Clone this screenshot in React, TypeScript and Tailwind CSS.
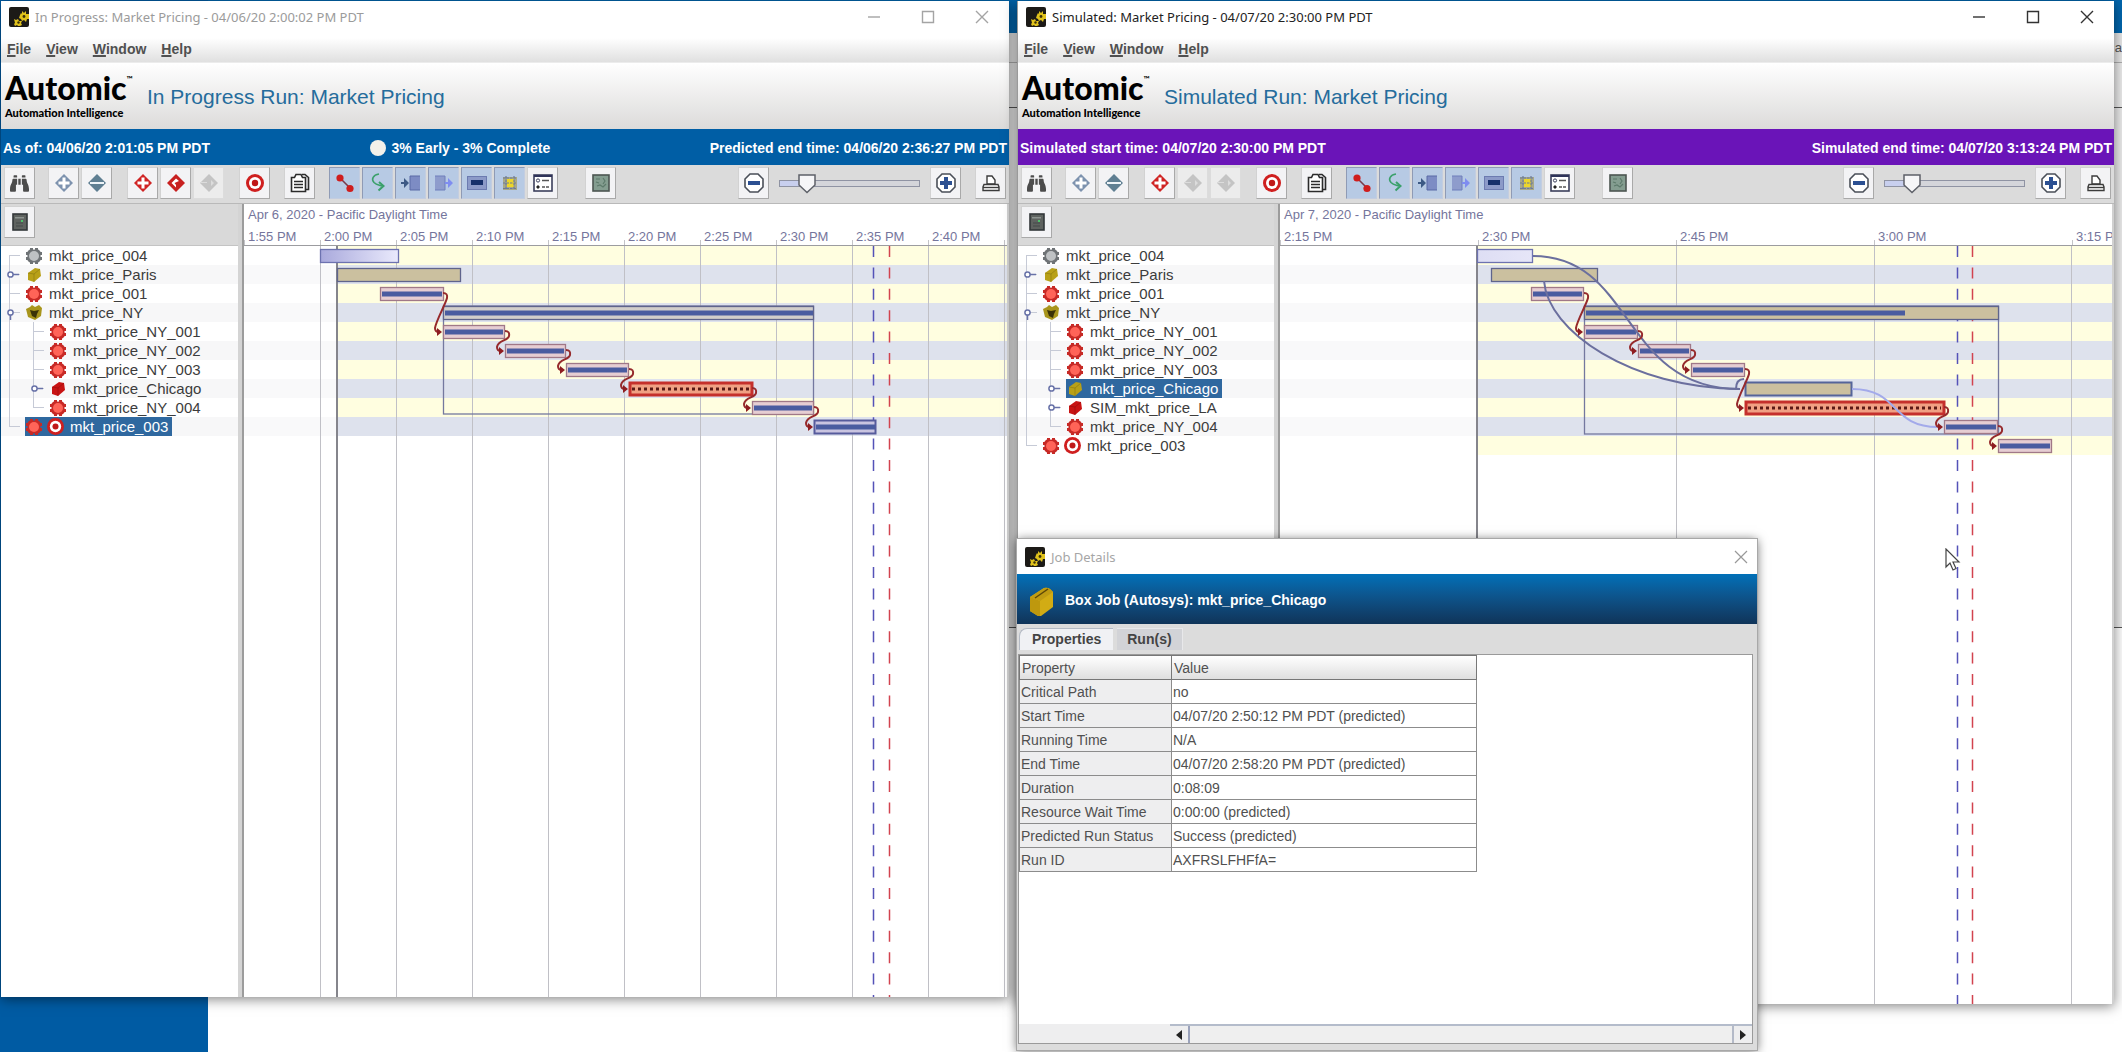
import { useState } from "react";
import type { ReactNode } from "react";
import { FaBinoculars } from "react-icons/fa";

/* ---------- icons ---------- */

function AppIcon() {
  return (
    <svg width="20" height="20" viewBox="0 0 20 20" aria-hidden="true">
      <rect width="20" height="20" rx="2" fill="#1c1a17" />
      <g fill="#e0c21c">
        <path d="M11 8l1-2 1 1V4l2 2 2-2v3l3 0v5l-2 0-1 3-2-2-2 1-1-2-2-1z" />
        <path d="M5 12l2 1 2-1 1 2h3l-1 2 1 2-2 1H9l-1-1-2 1-1-2 1-1z" />
      </g>
      <circle cx="15" cy="9.500" r="1.400" fill="#3c3208" />
      <circle cx="9.500" cy="15.500" r="1.200" fill="#3c3208" />
    </svg>
  );
}

function Diamond({ color, mark }: { color: string; mark: "plus" | "minus" | "left" | "right" }) {
  return (
    <svg width="20" height="20" viewBox="0 0 20 20" aria-hidden="true">
      <path d="M10 1l9 9-9 9-9-9z" fill={color} />
      {mark === "plus" && <path d="M8.500 4.500h3v4h4v3h-4v4h-3v-4h-4v-3h4z" fill="#fff" />}
      {mark === "minus" && <path d="M3 9h14v2H3z" fill="#eef4f8" />}
      {mark === "left" && <path d="M10 5.500L5.500 10l4.500 4.500v-2.500L8.500 10l4.500-2z" fill="#fff" />}
      {mark === "right" && <path d="M2 9h6v1H2zM12 7l3 3-3 3z" fill="#dcdcdc" />}
    </svg>
  );
}

function TargetIcon({ size }: { size: number }) {
  return (
    <svg width={size} height={size} viewBox="0 0 18 18" aria-hidden="true">
      <circle cx="9" cy="9" r="9" fill="#cf1f1f" />
      <circle cx="9" cy="9" r="6" fill="#fff" />
      <circle cx="9" cy="9" r="3.200" fill="#c01818" />
    </svg>
  );
}

function PagesIcon() {
  return (
    <svg width="20" height="20" viewBox="0 0 20 20" fill="none" stroke="#2b2b2b" strokeWidth="1.600" aria-hidden="true">
      <path d="M1.500 4.500h3l1.500-3h5l1.500 3h3v14h-14z" fill="#fff" />
      <path d="M12 1.500h3l3.500 3v12h-2.500" />
      <path d="M4 8.500h9M4 11.500h9M4 14.500h9" />
    </svg>
  );
}

function LinkIcon() {
  return (
    <svg width="20" height="20" viewBox="0 0 20 20" aria-hidden="true">
      <path d="M5 5l11 11" stroke="#7a3a4a" strokeWidth="1.600" />
      <circle cx="5" cy="5" r="3.600" fill="#cf1d1d" />
      <circle cx="15" cy="15.500" r="3.600" fill="#cf1d1d" />
    </svg>
  );
}

function CurveArrowIcon() {
  return (
    <svg width="20" height="20" viewBox="0 0 20 20" fill="none" stroke="#3aa06a" aria-hidden="true">
      <path d="M11 1C5 2 3 6 6 9.500c2 2 5 2.500 8 3.500" strokeWidth="1.600" />
      <path d="M11 9l4.500 4-5 4.500" strokeWidth="2" />
    </svg>
  );
}

function IntoBoxIcon() {
  return (
    <svg width="20" height="20" viewBox="0 0 20 20" aria-hidden="true">
      <rect x="9" y="3" width="10" height="14" fill="#7d8cc4" />
      <path d="M9 3v14M9 3h10M9 17h10" stroke="#5a6aa6" fill="none" />
      <path d="M0 9h3V5l5 5-5 5v-4H0z" fill="#3d5a85" />
    </svg>
  );
}

function OutOfBoxIcon() {
  return (
    <svg width="20" height="20" viewBox="0 0 20 20" aria-hidden="true">
      <rect x="1" y="3" width="10" height="14" fill="#8e9ccc" />
      <path d="M11 3v14M1 3h10M1 17h10" stroke="#6f7fbb" fill="none" />
      <path d="M11 9h3V5l5 5-5 5v-4h-3z" fill="#7f8df0" />
    </svg>
  );
}

function BarIcon() {
  return (
    <svg width="20" height="20" viewBox="0 0 20 20" aria-hidden="true">
      <rect x="0.500" y="3.500" width="19" height="13" fill="#8c9ac8" stroke="#6c7bb0" />
      <rect x="4" y="7" width="12" height="5" fill="#16306b" />
    </svg>
  );
}

function GridIcon() {
  return (
    <svg width="20" height="20" viewBox="0 0 20 20" aria-hidden="true">
      <rect x="3" y="4" width="14" height="13" fill="#a9a888" />
      <rect x="7" y="6" width="7" height="8" fill="#ecd62a" />
      <path d="M3 5h14M3 10h14M3 15.500h14M6 3v14M14 3v14" stroke="#6b7a9a" strokeWidth="1.200" strokeDasharray="2.500 1" />
    </svg>
  );
}

function LegendIcon() {
  return (
    <svg width="20" height="20" viewBox="0 0 20 20" aria-hidden="true">
      <rect x="1" y="2" width="18" height="16" fill="#fff" stroke="#3b3f5c" strokeWidth="1.600" />
      <path d="M1 3h18" stroke="#30345a" strokeWidth="2" />
      <circle cx="5" cy="7.500" r="1.600" fill="none" stroke="#3b3f5c" />
      <path d="M3 14l2-2 2 2-2 2z" fill="#222" />
      <path d="M9 7.500h7M9 14h3M13 14h3" stroke="#555" strokeWidth="1.500" />
    </svg>
  );
}

function ChartIcon() {
  return (
    <svg width="18" height="18" viewBox="0 0 18 18" aria-hidden="true">
      <rect x="1" y="1" width="16" height="16" fill="#849d90" stroke="#4d5652" strokeWidth="1.600" />
      <path d="M4 5h4M11 4l2 3-2 3M5 12l3-1 3 2 3-3M4 8l3 1" stroke="#5d7a6b" strokeWidth="1.200" fill="none" />
    </svg>
  );
}

function PanelIcon() {
  return (
    <svg width="16" height="18" viewBox="0 0 16 18" aria-hidden="true">
      <rect x="1" y="1" width="14" height="16" fill="#5f6360" stroke="#33373a" strokeWidth="1.600" />
      <rect x="3" y="4" width="9" height="1.500" fill="#8d9490" />
      <path d="M9 7h2v2H9z" fill="#4cc46a" />
      <path d="M4 10h7M4 13h7" stroke="#454a48" />
    </svg>
  );
}

function ZoomIcon({ plus }: { plus?: boolean }) {
  return (
    <svg width="20" height="20" viewBox="0 0 20 20" aria-hidden="true">
      <path d="M6 1h8l5 5v8l-5 5H6l-5-5V6z" fill="#fff" stroke="#4a4f58" strokeWidth="1.600" />
      <path d={plus ? "M8 4h4v4h4v4h-4v4H8v-4H4V8h4z" : "M4 8h12v4H4z"} fill="#2c5092" />
    </svg>
  );
}

function PrinterIcon() {
  return (
    <svg width="18" height="18" viewBox="0 0 18 18" fill="#fff" stroke="#3c3c3c" strokeWidth="1.400" aria-hidden="true">
      <path d="M5 10V2h5l3 4v4z" />
      <path d="M2 10.500h14l1 2.500v3.500H1V13z" />
      <path d="M1 13.500h16" />
    </svg>
  );
}

function Gear({ tone }: { tone: "red" | "gray" }) {
  const outer = tone === "red" ? "#c72a26" : "#6f7376";
  const inner = tone === "red" ? "#ff6458" : "#bfc2c4";
  return (
    <svg width="18" height="18" viewBox="0 0 18 18" className="shrink-0" aria-hidden="true">
      <g stroke={outer} strokeWidth="3">
        <path d="M6.500 1v16M11.500 1v16M1 6.500h16M1 11.500h16" />
        <path d="M3.500 3.500l11 11M14.500 3.500l-11 11" />
      </g>
      <circle cx="9" cy="9" r="6.600" fill={outer} />
      <circle cx="9" cy="9" r="5" fill={inner} />
    </svg>
  );
}

function BoxGlyph({ tone }: { tone: "gold" | "open" | "red" }) {
  const fill = tone === "red" ? "#c81414" : "#b8a018";
  const shade = tone === "red" ? "#8e0c0c" : "#80700e";
  return (
    <svg width="18" height="18" viewBox="0 0 18 18" className="shrink-0" aria-hidden="true">
      {tone === "open" ? (
        <>
          <path d="M1 5l4-2 2-2 3 2 4-2 3 3-1 8-6 4-7-3z" fill="#a8951c" />
          <path d="M5 6l4 1 5-1-2 4-1 4-4-2z" fill="#3a3208" />
        </>
      ) : (
        <>
          <path d="M3 7l7-5 5 1 1 7-7 6-6-2z" fill={fill} />
          <path d="M3 7l6 1 6-5M9 8v8" stroke={shade} fill="none" opacity="0.500" />
        </>
      )}
    </svg>
  );
}

/* ---------- tree ---------- */

type IconKind = "gearGray" | "gearRed" | "boxGold" | "boxOpen" | "boxRed" | "target";
type Node = {
  label: string;
  icons: IconKind[];
  child?: boolean;
  last?: boolean;
  handle?: "closed" | "open";
  selected?: boolean;
};

function NodeIcon({ kind }: { kind: IconKind }) {
  if (kind === "gearGray") return <Gear tone="gray" />;
  if (kind === "gearRed") return <Gear tone="red" />;
  if (kind === "boxGold") return <BoxGlyph tone="gold" />;
  if (kind === "boxOpen") return <BoxGlyph tone="open" />;
  if (kind === "boxRed") return <BoxGlyph tone="red" />;
  return <TargetIcon size={17} />;
}

function Branch({ node, first }: { node: Node; first: boolean }) {
  const x = node.child ? 32 : 8;
  const width = node.child ? 48 : 24;
  return (
    <svg width={width} height="19" className="shrink-0" fill="none" stroke="#c6cad6" aria-hidden="true">
      {node.child && <path d="M8.500 0v19" />}
      <path d={`M${x + 0.5} ${first ? 10 : 0}V${node.last ? 10 : 19}M${x} 9.500h11`} />
      {node.handle && (
        <g stroke="#6872a8" strokeWidth="1.500">
          <circle cx={x + 1.5} cy="9.500" r="2.600" fill="#fff" />
          <path d={node.handle === "closed" ? `M${x + 4} 9.500h6` : `M${x + 1.5} 12v5`} />
        </g>
      )}
    </svg>
  );
}

function Tree({ nodes }: { nodes: Node[] }) {
  return (
    <ul className="min-h-0 flex-1 overflow-hidden bg-white">
      {nodes.map((n, i) => (
        <li key={n.label} className={`flex h-[19px] items-center ${i % 2 ? "bg-[#f7f7f8]" : "bg-white"}`}>
          <Branch node={n} first={i === 0} />
          <button
            type="button"
            className={`flex h-[19px] items-center gap-1 pr-1 text-[15px] leading-[19px] whitespace-nowrap ${
              n.selected ? "bg-[#2f689f] text-white" : "text-[#3c3c3c]"
            }`}
          >
            {n.icons.map((k) => (
              <NodeIcon key={k} kind={k} />
            ))}
            <span className="pl-0.5">{n.label}</span>
          </button>
        </li>
      ))}
    </ul>
  );
}

/* ---------- gantt chart ---------- */

type Bar = {
  row: number;
  from: number;
  to: number;
  kind: "job" | "box" | "boxRun" | "boxPicked" | "early" | "critical" | "late";
  progress?: number;
};
type Plan = {
  rows: number;
  now: number;
  grid: number[];
  deadline: number;
  alert: number;
  bars: Bar[];
  frame: { x1: number; x2: number; bottom: number };
  links: { x: number; from: number; to: number }[];
  curves: { d: string; color: string }[];
  gradient: string;
};

const mid = (row: number) => row * 19 + 10;

const barStroke: Record<Bar["kind"], string> = {
  job: "#a07888",
  box: "#5f648c",
  boxRun: "#5f648c",
  boxPicked: "#55659a",
  early: "#6d72b0",
  critical: "#c5302c",
  late: "#565b9c",
};

const barFill: Record<Bar["kind"], string> = {
  job: "#e6cdd2",
  box: "#cbc09f",
  boxRun: "#d2cecb",
  boxPicked: "#cbc09f",
  early: "",
  critical: "#f0a083",
  late: "#c9c4e0",
};

function GanttBar({ bar, gradient }: { bar: Bar; gradient: string }) {
  const y = bar.row * 19 + 3.5;
  const w = bar.to - bar.from;
  if (bar.kind === "critical") {
    return (
      <g>
        <rect x={bar.from + 1} y={y + 0.5} width={w - 1} height="12" fill={barFill.critical} stroke={barStroke.critical} strokeWidth="3" />
        <path d={`M${bar.from + 3} ${y + 6.5}h${w - 6}`} stroke="#5c1a16" strokeWidth="3" strokeDasharray="3 3" />
      </g>
    );
  }
  return (
    <g>
      <rect
        x={bar.from + 0.5}
        y={y}
        width={w - 1}
        height="13"
        fill={bar.kind === "early" ? `url(#${gradient})` : barFill[bar.kind]}
        stroke={barStroke[bar.kind]}
        strokeWidth={bar.kind === "boxPicked" || bar.kind === "late" ? 2 : 1.3}
      />
      {bar.progress !== undefined && (
        <rect x={bar.from + 2} y={y + 4} width={bar.progress - bar.from - 3} height="5" fill="#4a5ca0" />
      )}
    </g>
  );
}

function Gantt({ plan }: { plan: Plan }) {
  return (
    <svg width="100%" height="100%" className="absolute inset-0" role="img" aria-label="Run schedule">
      <defs>
        <linearGradient id={plan.gradient}>
          <stop offset="0" stopColor={plan.gradient === "fadeA" ? "#a9a9dc" : "#dedef4"} />
          <stop offset="1" stopColor={plan.gradient === "fadeA" ? "#eaeafc" : "#e6e6f8"} />
        </linearGradient>
      </defs>
      {Array.from({ length: plan.rows }, (_, i) => (
        <g key={i}>
          <rect x="0" y={i * 19} width={plan.now} height="19" fill={i % 2 ? "#f9f9fa" : "#fff"} />
          <rect x={plan.now} y={i * 19} width="100%" height="19" fill={i % 2 ? "#dee2ed" : "#fffee0"} />
        </g>
      ))}
      {plan.grid.map((x) => (
        <rect key={x} x={x} y="0" width="1" height="100%" fill="#c0c0c6" />
      ))}
      <rect x={plan.now - 1} y="0" width="2" height="100%" fill="#85858c" />
      <line x1={plan.deadline + 0.5} x2={plan.deadline + 0.5} y1="0" y2="100%" stroke="#5452b8" strokeWidth="1.500" strokeDasharray="11 10.400" />
      <line x1={plan.alert + 0.5} x2={plan.alert + 0.5} y1="0" y2="100%" stroke="#d2434f" strokeWidth="1.500" strokeDasharray="11 10.400" />
      <rect
        x={plan.frame.x1 + 0.5}
        y="60"
        width={plan.frame.x2 - plan.frame.x1 - 1}
        height={plan.frame.bottom - 60}
        fill="none"
        stroke="#74789f"
        strokeWidth="1.300"
      />
      {plan.bars.map((b) => (
        <GanttBar key={b.row} bar={b} gradient={plan.gradient} />
      ))}
      {plan.curves.map((c) => (
        <path key={c.d} d={c.d} fill="none" stroke={c.color} strokeWidth="2" />
      ))}
      {plan.links.map(({ x, from, to }) => {
        const a = mid(from) - 1;
        const b = mid(to);
        return (
          <g key={x}>
            <path
              d={`M${x} ${a}Q${x + 5} ${a} ${x + 4} ${a + 5}C${x + 3} ${a + 10} ${x - 7} ${b - 11} ${x - 8} ${b - 4}Q${x - 8} ${b} ${x - 4} ${b}`}
              fill="none"
              stroke="#962a2c"
              strokeWidth="2"
            />
            <path d={`M${x - 6} ${b - 4}L${x - 1} ${b}L${x - 6} ${b + 4}z`} fill="#8e1c20" />
          </g>
        );
      })}
    </svg>
  );
}

/* ---------- toolbar ---------- */

function Tool({ label, pressed, disabled, children }: { label: string; pressed?: boolean; disabled?: boolean; children: ReactNode }) {
  return (
    <button
      type="button"
      aria-label={label}
      aria-pressed={pressed}
      disabled={disabled}
      className={`flex h-8 w-[31px] shrink-0 items-center justify-center border ${
        pressed
          ? "border-[#8f9bb5] border-r-[#c3cde0] border-b-[#c3cde0] bg-[#b7cae4]"
          : disabled
            ? "border-[#dcdcdc] bg-[#ececec]"
            : "border-[#d2d2d2] border-r-[#a9a9a9] border-b-[#a9a9a9] bg-[#f3f3f5]"
      }`}
    >
      {children}
    </button>
  );
}

function ZoomSlider() {
  const [value, setValue] = useState(20);
  return (
    <div className="relative mx-2.5 flex h-8 w-[141px] items-center">
      <div className="h-[7px] w-full border border-[#8f93a3] bg-[#d4d5da]">
        <div className="h-full bg-[#c8cfee]" style={{ width: `${value}%` }} />
      </div>
      <div className="absolute top-[7px] -ml-[9px] h-5 w-[18px]" style={{ left: `${value}%` }}>
        <svg width="18" height="20" viewBox="0 0 18 20" aria-hidden="true">
          <path d="M1 1h16v10l-8 7.500L1 11z" fill="#f6f6f8" stroke="#5d6068" strokeWidth="1.500" />
        </svg>
      </div>
      <input
        type="range"
        aria-label="Zoom"
        min={0}
        max={100}
        value={value}
        onChange={(e) => setValue(Number(e.target.value))}
        className="absolute inset-0 w-full opacity-0"
      />
    </div>
  );
}

function Toolbar({ pathBack }: { pathBack: boolean }) {
  return (
    <div className="flex h-[39px] shrink-0 items-start border-b border-[#b9b9b9] bg-[#dbdbdb] px-[3px] pt-0.5" role="toolbar">
      <Tool label="Find">
        <FaBinoculars size={19} color="#4c4c4c" />
      </Tool>
      <div className="ml-[13px] flex gap-0.5">
        <Tool label="Expand all"><Diamond color="#7d92ae" mark="plus" /></Tool>
        <Tool label="Collapse all"><Diamond color="#5f7f92" mark="minus" /></Tool>
      </div>
      <div className="ml-[15px] flex gap-0.5">
        <Tool label="Show critical path"><Diamond color="#d02424" mark="plus" /></Tool>
        <Tool label="Previous on path" disabled={!pathBack}>
          <Diamond color={pathBack ? "#c82020" : "#c4c4c4"} mark={pathBack ? "left" : "right"} />
        </Tool>
        <Tool label="Next on path" disabled><Diamond color="#c4c4c4" mark="right" /></Tool>
      </div>
      <div className="ml-[15px] flex gap-[14px]">
        <Tool label="Targets"><TargetIcon size={18} /></Tool>
        <Tool label="Reports"><PagesIcon /></Tool>
      </div>
      <div className="ml-[14px] flex gap-0.5">
        <Tool label="Show links" pressed><LinkIcon /></Tool>
        <Tool label="Show dependencies" pressed><CurveArrowIcon /></Tool>
        <Tool label="Show predecessors" pressed><IntoBoxIcon /></Tool>
        <Tool label="Show successors" pressed><OutOfBoxIcon /></Tool>
        <Tool label="Show progress" pressed><BarIcon /></Tool>
        <Tool label="Show grid" pressed><GridIcon /></Tool>
        <Tool label="Legend"><LegendIcon /></Tool>
      </div>
      <div className="ml-[27px]">
        <Tool label="Chart view"><ChartIcon /></Tool>
      </div>
      <div className="ml-auto flex">
        <Tool label="Zoom out"><ZoomIcon /></Tool>
        <ZoomSlider />
        <Tool label="Zoom in"><ZoomIcon plus /></Tool>
        <div className="ml-[14px]">
          <Tool label="Print"><PrinterIcon /></Tool>
        </div>
      </div>
    </div>
  );
}

/* ---------- window ---------- */

function CaptionButton({ label, children }: { label: string; children: ReactNode }) {
  return (
    <button type="button" aria-label={label} className="flex h-8 w-[54px] items-center justify-center">
      <svg width="14" height="14" viewBox="0 0 14 14" fill="none" stroke="currentColor" strokeWidth="1.400">
        {children}
      </svg>
    </button>
  );
}

const closeMark = <path d="M1 1l12 12M13 1L1 13" />;

function RunWindow(props: {
  active: boolean;
  caption: string;
  heading: string;
  status: ReactNode;
  date: string;
  ticks: string[];
  nodes: Node[];
  plan: Plan;
  pathBack: boolean;
  treeClass: string;
  tickClass: string;
  axisClass: string;
}) {
  return (
    <section
      className={`flex h-full min-w-0 flex-col bg-white shadow-[0_2px_12px_rgba(0,0,0,0.500)] ${
        props.active ? "border-l border-[#9a9a9a]" : ""
      }`}
    >
      <header className="flex h-[37px] shrink-0 items-start">
        <h1
          className={`flex flex-1 items-center gap-1.5 pt-1.5 pl-2 font-['Noto_Sans',sans-serif] text-[13px] leading-5 whitespace-nowrap ${
            props.active ? "text-[#222]" : "text-[#9b9b9b]"
          }`}
        >
          <AppIcon />
          {props.caption}
        </h1>
        <div className={`flex ${props.active ? "text-[#333]" : "text-[#a4a4a4]"}`}>
          <CaptionButton label="Minimize"><path d="M1 7h12" /></CaptionButton>
          <CaptionButton label="Maximize"><path d="M1.500 1.500h11v11h-11z" /></CaptionButton>
          <CaptionButton label="Close">{closeMark}</CaptionButton>
        </div>
      </header>
      <nav className="flex h-[25px] shrink-0 items-center gap-[15px] border-b border-[#ececec] bg-linear-to-b from-white to-[#e0e0e0] pb-0.5 pl-1.5 text-[14px] font-bold text-[#505050]">
        {["File", "View", "Window", "Help"].map((m) => (
          <button key={m} type="button">
            <span className="underline decoration-2 underline-offset-1">{m[0]}</span>
            {m.slice(1)}
          </button>
        ))}
      </nav>
      <div className="flex h-[66px] shrink-0 items-start gap-3 bg-linear-to-b from-white to-[#dcdbda] pt-2 pl-1">
        <div className="w-[130px] text-black">
          <div className="flex font-['Lato',sans-serif] text-[32px] leading-[34px] font-black">
            Automic
            <sup className="pt-2 text-[8px] leading-2 font-bold">™</sup>
          </div>
          <div className="font-['Lato',sans-serif] text-[11px] leading-4 font-black whitespace-nowrap">Automation Intelligence</div>
        </div>
        <h2 className="pt-3 text-[21px] leading-7 whitespace-nowrap text-[#256c9c]">{props.heading}</h2>
      </div>
      {props.status}
      <Toolbar pathBack={props.pathBack} />
      <div className="flex min-h-0 flex-1">
        <div className={`flex shrink-0 flex-col ${props.treeClass}`}>
          <div className="h-[42px] shrink-0 border-b border-[#c4c4c4] bg-[#d9d9d9] pt-0.5 pl-[3px]">
            <Tool label="Panel"><PanelIcon /></Tool>
          </div>
          <Tree nodes={props.nodes} />
        </div>
        <div className="w-1.5 shrink-0 border-r-2 border-[#9c9c9c] bg-[#d4d4d4]" />
        <div className="flex min-w-0 flex-1 flex-col">
          <div className={`h-[42px] shrink-0 overflow-hidden border-b border-[#9c9ca0] bg-white text-[#75759c] ${props.axisClass}`}>
            <div className="pl-1 text-[13px] leading-[22px]">{props.date}</div>
            <div className="flex">
              {props.ticks.map((t) => (
                <div
                  key={t}
                  className={`relative h-5 shrink-0 pl-1 text-[13px] leading-[21px] whitespace-nowrap before:absolute before:bottom-0 before:left-0 before:h-1.5 before:w-px before:bg-[#c4c4c8] ${props.tickClass}`}
                >
                  {t}
                </div>
              ))}
            </div>
          </div>
          <div className="relative min-h-0 flex-1 overflow-hidden bg-white">
            <Gantt plan={props.plan} />
          </div>
        </div>
        <div className="w-0.5 shrink-0 bg-[#d0d0d0]" />
      </div>
    </section>
  );
}

/* ---------- job details ---------- */

const details: [string, string][] = [
  ["Critical Path", "no"],
  ["Start Time", "04/07/20 2:50:12 PM PDT (predicted)"],
  ["Running Time", "N/A"],
  ["End Time", "04/07/20 2:58:20 PM PDT (predicted)"],
  ["Duration", "0:08:09"],
  ["Resource Wait Time", "0:00:00 (predicted)"],
  ["Predicted Run Status", "Success (predicted)"],
  ["Run ID", "AXFRSLFHFfA="],
];

function JobDetails() {
  return (
    <section
      role="dialog"
      aria-label="Job Details"
      className="absolute top-[538px] -bottom-[46px] left-0 flex w-[740px] flex-col bg-[#dcdcdc] pb-1.5 shadow-[0_1px_10px_rgba(0,0,0,0.600)] ring-1 ring-[#a8a8a8]"
    >
      <header className="flex h-[35px] shrink-0 items-center justify-between bg-white pl-2">
        <h2 className="flex items-center gap-1.5 font-['Noto_Sans',sans-serif] text-[13px] leading-5 text-[#a6a6a6]">
          <AppIcon />
          Job Details
        </h2>
        <button type="button" aria-label="Close" className="flex h-8 w-8 items-center justify-center text-[#999]">
          <svg width="14" height="14" viewBox="0 0 14 14" fill="none" stroke="currentColor" strokeWidth="1.200">
            {closeMark}
          </svg>
        </button>
      </header>
      <div className="flex h-[50px] shrink-0 items-center gap-2 bg-linear-to-b from-[#0070b8] to-[#0f3459] pt-0.5 pl-2.5 text-[14px] font-bold text-white">
        <svg width="30" height="34" viewBox="0 0 30 34" className="mt-0.5" aria-hidden="true">
          <path d="M3 13L17 4q3-1 6 1l3 3v15L14 32l-3 0-8-5z" fill="#d2ac14" />
          <path d="M3 13l10 4v15l-2 0-8-5z" fill="#be980e" />
          <path d="M3 13L17 4q3-1 6 1l3 3-13 9z" fill="#c09c12" />
          <path d="M8 14L21 5" stroke="#5c4708" strokeWidth="1.500" />
        </svg>
        Box Job (Autosys): mkt_price_Chicago
      </div>
      <div className="flex h-[30px] shrink-0 items-start gap-1 pt-1 pl-0.5 text-[14px] font-bold text-[#444]" role="tablist">
        <button type="button" role="tab" aria-selected="true" className="h-[22px] rounded-tl-lg border-t border-l border-[#b4bac4] bg-[#f0f1f4] px-3">
          Properties
        </button>
        <button type="button" role="tab" aria-selected="false" className="h-[22px] border-t border-r border-[#e8e8ea] bg-[#d2d3d7] px-2.5">
          Run(s)
        </button>
      </div>
      <div className="mr-1 ml-px flex min-h-0 flex-1 flex-col border border-[#9a9a9a] bg-white">
        <div className="min-h-0 flex-1 overflow-hidden">
          <table className="w-[458px] table-fixed border-collapse text-left text-[14px] leading-5 text-[#505050]">
            <thead>
              <tr className="h-6 bg-linear-to-b from-white to-[#dedede]">
                <th scope="col" className="w-[152px] border border-[#777] p-0 pl-0.5 font-normal">Property</th>
                <th scope="col" className="border border-[#777] p-0 pl-0.5 font-normal">Value</th>
              </tr>
            </thead>
            <tbody>
              {details.map(([k, v]) => (
                <tr key={k} className="h-6">
                  <th scope="row" className="border border-[#8c8c8c] bg-[#eeeeef] p-0 pl-px font-normal whitespace-nowrap">{k}</th>
                  <td className="border border-[#8c8c8c] p-0 pl-px whitespace-nowrap">{v}</td>
                </tr>
              ))}
            </tbody>
          </table>
        </div>
        <div className="flex h-[19px] shrink-0 bg-[#eeeeef] pl-[151px]">
          <div className="flex flex-1 border-t-2 border-[#b4bccb]">
            <button type="button" aria-label="Scroll left" className="flex w-5 items-center justify-center border-r-2 border-[#9aa2bb]">
              <svg width="6" height="10" viewBox="0 0 6 10" aria-hidden="true"><path d="M6 0v10L0 5z" fill="#222" /></svg>
            </button>
            <div className="flex-1 bg-[#efefef]" />
            <button type="button" aria-label="Scroll right" className="flex w-5 items-center justify-center border-l-2 border-[#b4bac8]">
              <svg width="6" height="10" viewBox="0 0 6 10" aria-hidden="true"><path d="M0 0v10l6-5z" fill="#222" /></svg>
            </button>
          </div>
        </div>
      </div>
    </section>
  );
}

/* ---------- data ---------- */

const progressNodes: Node[] = [
  { label: "mkt_price_004", icons: ["gearGray"] },
  { label: "mkt_price_Paris", icons: ["boxGold"], handle: "closed" },
  { label: "mkt_price_001", icons: ["gearRed"] },
  { label: "mkt_price_NY", icons: ["boxOpen"], handle: "open" },
  { label: "mkt_price_NY_001", icons: ["gearRed"], child: true },
  { label: "mkt_price_NY_002", icons: ["gearRed"], child: true },
  { label: "mkt_price_NY_003", icons: ["gearRed"], child: true },
  { label: "mkt_price_Chicago", icons: ["boxRed"], child: true, handle: "closed" },
  { label: "mkt_price_NY_004", icons: ["gearRed"], child: true, last: true },
  { label: "mkt_price_003", icons: ["gearRed", "target"], last: true, selected: true },
];

const simulatedNodes: Node[] = [
  ...progressNodes.slice(0, 7),
  { label: "mkt_price_Chicago", icons: ["boxGold"], child: true, handle: "closed", selected: true },
  { label: "SIM_mkt_price_LA", icons: ["boxRed"], child: true, handle: "closed" },
  { label: "mkt_price_NY_004", icons: ["gearRed"], child: true, last: true },
  { label: "mkt_price_003", icons: ["gearRed", "target"], last: true },
];

const progressPlan: Plan = {
  rows: 10,
  now: 93,
  grid: [76, 152, 228, 304, 380, 456, 532, 608, 684, 760],
  deadline: 629,
  alert: 645,
  gradient: "fadeA",
  frame: { x1: 199, x2: 570, bottom: 168 },
  bars: [
    { row: 0, from: 76, to: 155, kind: "early" },
    { row: 1, from: 93, to: 217, kind: "box" },
    { row: 2, from: 136, to: 200, kind: "job", progress: 199 },
    { row: 3, from: 199, to: 570, kind: "boxRun", progress: 570 },
    { row: 4, from: 199, to: 261, kind: "job", progress: 260 },
    { row: 5, from: 261, to: 322, kind: "job", progress: 321 },
    { row: 6, from: 322, to: 385, kind: "job", progress: 384 },
    { row: 7, from: 385, to: 508, kind: "critical" },
    { row: 8, from: 508, to: 570, kind: "job", progress: 569 },
    { row: 9, from: 570, to: 632, kind: "late", progress: 632 },
  ],
  links: [
    { x: 199, from: 2, to: 4 },
    { x: 261, from: 4, to: 5 },
    { x: 322, from: 5, to: 6 },
    { x: 385, from: 6, to: 7 },
    { x: 508, from: 7, to: 8 },
    { x: 570, from: 8, to: 9 },
  ],
  curves: [],
};

const simulatedPlan: Plan = {
  rows: 11,
  now: 197,
  grid: [396, 594, 791],
  deadline: 677,
  alert: 692,
  gradient: "fadeB",
  frame: { x1: 304, x2: 719, bottom: 188 },
  bars: [
    { row: 0, from: 197, to: 253, kind: "early" },
    { row: 1, from: 211, to: 318, kind: "box" },
    { row: 2, from: 251, to: 304, kind: "job", progress: 303 },
    { row: 3, from: 304, to: 719, kind: "box", progress: 626 },
    { row: 4, from: 304, to: 358, kind: "job", progress: 357 },
    { row: 5, from: 358, to: 411, kind: "job", progress: 410 },
    { row: 6, from: 411, to: 465, kind: "job", progress: 464 },
    { row: 7, from: 465, to: 572, kind: "boxPicked" },
    { row: 8, from: 465, to: 664, kind: "critical" },
    { row: 9, from: 664, to: 718, kind: "job", progress: 717 },
    { row: 10, from: 718, to: 772, kind: "job", progress: 771 },
  ],
  links: [
    { x: 304, from: 2, to: 4 },
    { x: 358, from: 4, to: 5 },
    { x: 411, from: 5, to: 6 },
    { x: 465, from: 6, to: 8 },
    { x: 664, from: 8, to: 9 },
    { x: 718, from: 9, to: 10 },
  ],
  curves: [
    { d: "M253 10C355 10 340 143 460 143", color: "#6b6f9e" },
    { d: "M264 35C268 85 350 142 460 143", color: "#6b6f9e" },
    { d: "M464 133C458 133 456 138 456 143", color: "#6b6f9e" },
    { d: "M572 143C620 143 610 181 658 181", color: "#a3aaea" },
  ],
};

export default function App() {
  return (
    <div className="relative flex h-screen min-h-[900px] gap-2 overflow-hidden bg-white pt-px pr-2 pl-px font-['Liberation_Sans',Arial,sans-serif]">
      <div className="absolute inset-0 flex flex-col" aria-hidden="true">
        <div className="h-[33px] bg-[#0066ae]" />
        <div className="flex h-[30px] items-center justify-end border-b border-[#b0b0b0] bg-[#e8e8e8] text-[13px] text-[#555]">a</div>
        <div className="h-[45px] border-b border-[#555] bg-[#ececec]" />
        <div className="h-[520px] border-b border-[#555] bg-[#ececec]" />
        <div className="flex-1 bg-white" />
      </div>
      <div className="absolute bottom-0 left-0 h-full w-[208px] bg-[#005ba3]" aria-hidden="true" />
      <div className="relative min-w-0 flex-[1008] pb-[55px]">
        <RunWindow
          active={false}
          caption="In Progress: Market Pricing - 04/06/20 2:00:02 PM PDT"
          heading="In Progress Run: Market Pricing"
          date="Apr 6, 2020 - Pacific Daylight Time"
          ticks={["1:55 PM", "2:00 PM", "2:05 PM", "2:10 PM", "2:15 PM", "2:20 PM", "2:25 PM", "2:30 PM", "2:35 PM", "2:40 PM", ""]}
          nodes={progressNodes}
          plan={progressPlan}
          pathBack
          treeClass="w-[237px]"
          tickClass="w-[76px]"
          axisClass="pl-0"
          status={
            <div className="flex h-9 shrink-0 items-center justify-between bg-[#005ea5] px-0.5 pt-0.5 text-[14px] font-bold whitespace-nowrap text-white">
              <span>As of: 04/06/20 2:01:05 PM PDT</span>
              <span className="flex items-center gap-1.5">
                <span className="size-4 rounded-full bg-[#f3f1ea]" />
                3% Early - 3% Complete
              </span>
              <span>Predicted end time: 04/06/20 2:36:27 PM PDT</span>
            </div>
          }
        />
      </div>
      <div className="relative min-w-0 flex-[1097] pb-12">
        <RunWindow
          active
          caption="Simulated: Market Pricing - 04/07/20 2:30:00 PM PDT"
          heading="Simulated Run: Market Pricing"
          date="Apr 7, 2020 - Pacific Daylight Time"
          ticks={["2:15 PM", "2:30 PM", "2:45 PM", "3:00 PM", "3:15 PM"]}
          nodes={simulatedNodes}
          plan={simulatedPlan}
          pathBack={false}
          treeClass="w-[256px]"
          tickClass="w-[198px]"
          axisClass="pl-0"
          status={
            <div className="flex h-9 shrink-0 items-center justify-between bg-[#6a14b8] px-0.5 pt-0.5 text-[14px] font-bold whitespace-nowrap text-white">
              <span>Simulated start time: 04/07/20 2:30:00 PM PDT</span>
              <span>Simulated end time: 04/07/20 3:13:24 PM PDT</span>
            </div>
          }
        />
        <div className="absolute inset-x-0 top-0 bottom-12">
          <JobDetails />
        </div>
        <svg width="16" height="24" viewBox="0 0 16 24" className="absolute top-[547px] right-[153px]" aria-hidden="true">
          <path d="M1 1v18l4-4 3 7 3-1.500-3-6.500h6z" fill="#fff" stroke="#444" strokeWidth="1.200" />
        </svg>
      </div>
    </div>
  );
}
